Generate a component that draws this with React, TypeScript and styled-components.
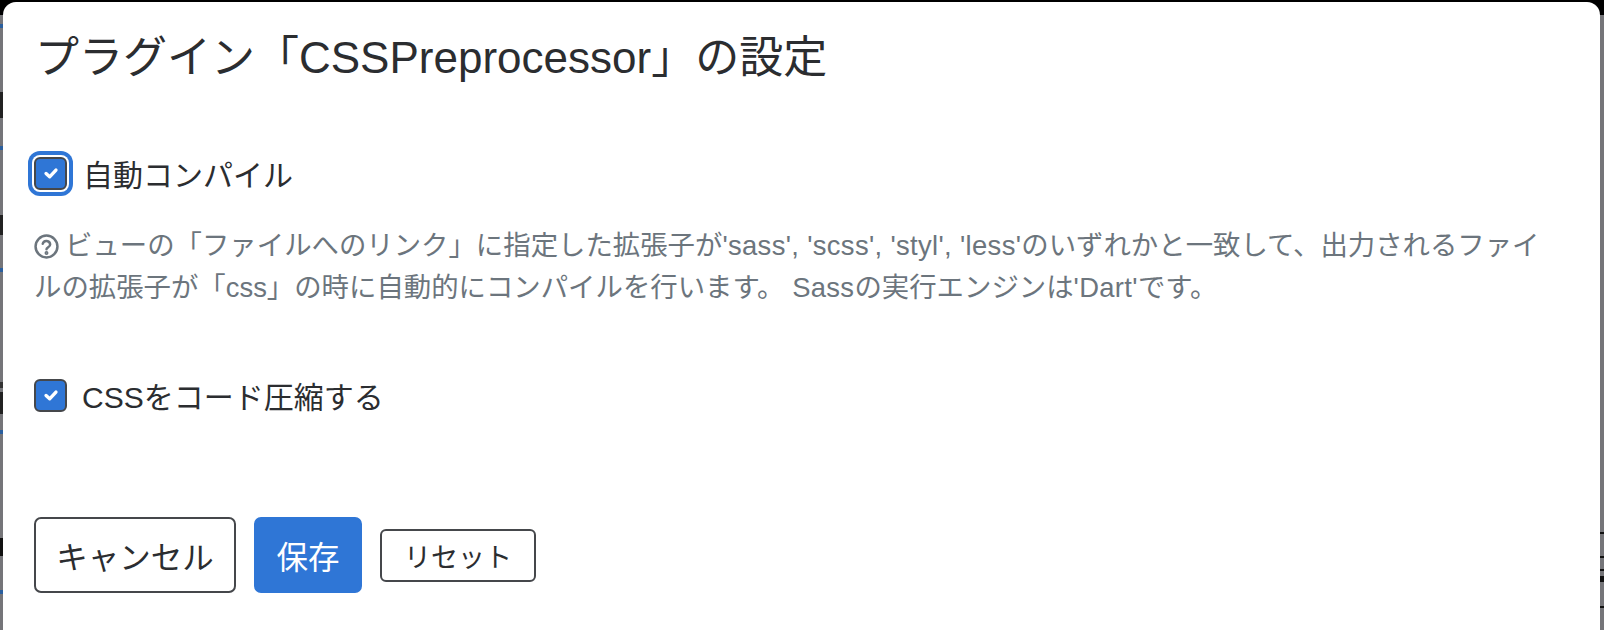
import React from "react";
import styled, { createGlobalStyle } from "styled-components";

const Global = createGlobalStyle`
  html, body { margin: 0; padding: 0; height: 630px; overflow: hidden; }
  body { font-family: "Liberation Sans", "Noto Sans CJK JP", sans-serif; }
  #root { height: 630px; }
`;

const Backdrop = styled.div`
  position: relative;
  box-sizing: border-box;
  width: 1604px;
  height: 630px;
  padding: 2px 4px 0 3px;
  background: #757579;
  overflow: hidden;
`;

const TopBar = styled.div`
  position: absolute;
  left: 0;
  right: 0;
  top: 0;
  height: 15px;
  background: #000;
`;

const Mark = styled.div<{ $x: number; $y: number; $w: number; $h: number; $c?: string }>`
  position: absolute;
  left: ${(p) => p.$x}px;
  top: ${(p) => p.$y}px;
  width: ${(p) => p.$w}px;
  height: ${(p) => p.$h}px;
  background: ${(p) => p.$c ?? "#111"};
`;

const Dialog = styled.section`
  position: relative;
  box-sizing: border-box;
  height: 100%;
  background: #fff;
  border-radius: 13px 13px 0 0;
  padding: 0 36px 0 31px;
  color: #212529;
`;

const Title = styled.h3`
  margin: 0;
  padding: 28px 0 0 1px;
  font-size: 44px;
  line-height: 56px;
  height: 124px;
  box-sizing: border-box;
  font-weight: 400;
  color: #2b2d30;
  white-space: nowrap;
`;

const CheckRow = styled.label<{ $gap: number; $height: number }>`
  display: flex;
  align-items: center;
  gap: ${(p) => p.$gap}px;
  height: ${(p) => p.$height}px;
  font-size: 30px;
  color: #2b2d30;
`;

const Box = styled.span<{ $focus?: boolean }>`
  box-sizing: border-box;
  flex: none;
  display: flex;
  align-items: center;
  justify-content: center;
  width: 33px;
  height: 33px;
  border: 2px solid #45474b;
  border-radius: 6px;
  background: #2f76d6;
  box-shadow: ${(p) => (p.$focus ? "0 0 0 2px #fff, 0 0 0 6px #2f76d6" : "none")};
`;

const Help = styled.p`
  margin: 0;
  padding-top: 5px;
  height: 154px;
  box-sizing: border-box;
  font-size: 27.4px;
  line-height: 42px;
  color: #6c757d;
`;

const HelpLine = styled.span`
  display: block;
  white-space: nowrap;
`;

const Latin = styled.span`
  letter-spacing: 0.35px;
`;

const HelpIcon = styled.svg`
  width: 25px;
  height: 25px;
  vertical-align: -4px;
  margin-right: 6px;
`;

const Actions = styled.div`
  display: flex;
  align-items: center;
  gap: 18px;
  margin-top: 101px;
`;

const Button = styled.button<{ $variant?: "primary" | "small" }>`
  box-sizing: border-box;
  padding: 0;
  font-family: inherit;
  cursor: pointer;
  border-radius: ${(p) => (p.$variant === "small" ? "6px" : "7px")};
  border: 2px solid ${(p) => (p.$variant === "primary" ? "#2f76d6" : "#45474b")};
  background: ${(p) => (p.$variant === "primary" ? "#2f76d6" : "#fff")};
  color: ${(p) => (p.$variant === "primary" ? "#fff" : "#2b2d30")};
  font-size: ${(p) => (p.$variant === "small" ? "27px" : "31.5px")};
  height: ${(p) => (p.$variant === "small" ? "53px" : "76px")};
  width: ${(p) => (p.$variant === "small" ? "156px" : p.$variant === "primary" ? "108px" : "202px")};
`;

const Check = () => (
  <svg width="18" height="18" viewBox="0 0 16 16" fill="none">
    <path d="M3.6 8.4 6.8 11.4 12.4 5.4" stroke="#fff" strokeWidth="3" strokeLinecap="round" strokeLinejoin="round" />
  </svg>
);

const leftMarks = [
  { x: 0, y: 92, w: 3, h: 26, c: "#222" },
  { x: 0, y: 215, w: 3, h: 20, c: "#222" },
  { x: 0, y: 382, w: 3, h: 6, c: "#333" },
  { x: 0, y: 392, w: 3, h: 22, c: "#222" },
  { x: 0, y: 538, w: 3, h: 18, c: "#111" },
  { x: 0, y: 24, w: 3, h: 4, c: "#2b5f9e" },
  { x: 0, y: 146, w: 3, h: 4, c: "#2b5f9e" },
  { x: 0, y: 268, w: 3, h: 4, c: "#2b5f9e" },
  { x: 0, y: 430, w: 3, h: 4, c: "#2b5f9e" },
  { x: 0, y: 590, w: 3, h: 4, c: "#2b5f9e" },
];

const rightMarks = [
  { x: 1600, y: 532, w: 4, h: 2 },
  { x: 1600, y: 556, w: 4, h: 2 },
  { x: 1600, y: 569, w: 4, h: 2 },
  { x: 1600, y: 576, w: 4, h: 6 },
  { x: 1600, y: 606, w: 4, h: 2 },
];

export default function App() {
  return (
    <>
      <Global />
      <Backdrop>
        <TopBar />
        {[...leftMarks, ...rightMarks].map((m, i) => (
          <Mark key={i} $x={m.x} $y={m.y} $w={m.w} $h={m.h} $c={(m as { c?: string }).c} />
        ))}
        <Dialog>
          <Title>プラグイン「CSSPreprocessor」の設定</Title>
          <CheckRow $gap={16} $height={94}>
            <Box $focus>
              <Check />
            </Box>
            自動コンパイル
          </CheckRow>
          <Help>
            <HelpLine>
              <HelpIcon viewBox="0 0 24 24" fill="none" stroke="#6c757d" strokeWidth="2.4" strokeLinecap="round">
                <circle cx="12" cy="12" r="10.5" />
                <path d="M8.4 9.4a3.6 3.6 0 0 1 7.1 .8c0 2.2-3.5 2.6-3.5 4.4" />
                <circle cx="12" cy="18.2" r="0.7" fill="#6c757d" />
              </HelpIcon>
              ビューの「ファイルへのリンク」に指定した拡張子が<Latin>'sass', 'scss', 'styl', 'less'</Latin>のいずれかと一致して、出力されるファイ
            </HelpLine>
            <HelpLine>
              ルの拡張子が「css」の時に自動的にコンパイルを行います。 <Latin>Sass</Latin>の実行エンジンは<Latin>'Dart'</Latin>です。
            </HelpLine>
          </Help>
          <CheckRow $gap={15} $height={42}>
            <Box>
              <Check />
            </Box>
            CSSをコード圧縮する
          </CheckRow>
          <Actions>
            <Button>キャンセル</Button>
            <Button $variant="primary">保存</Button>
            <Button $variant="small">リセット</Button>
          </Actions>
        </Dialog>
      </Backdrop>
    </>
  );
}
